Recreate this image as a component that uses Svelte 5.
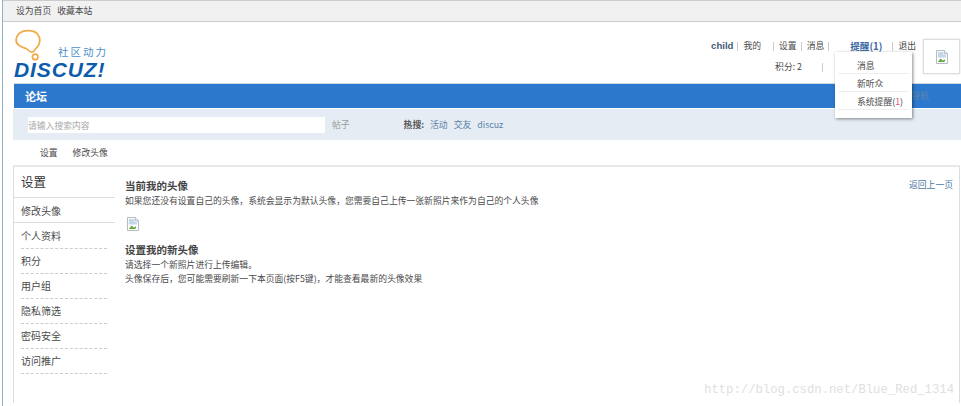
<script>
    const sideLinks = ['个人资料', '积分', '用户组', '隐私筛选', '密码安全', '访问推广'];
    const hotWords = ['活动', '交友', 'discuz'];
</script>

<div class="page">
    <div class="topbar">
        <span>设为首页</span>
        <span>收藏本站</span>
    </div>

    <header class="header">
        <div class="logo">
            <svg class="cloud" width="31" height="35" viewBox="0 0 28 32">
                <path d="M6 4.500C10 .5 20 .5 23.500 5c3 4 2 9.500-1.500 12.500-1.500 1.300-1.500 3-3.500 3.500-2 .5-3.500-1-5-2.700-1.200-1.300-5-1-7.500-3.500C2.500 12.500 3 7.500 6 4.500z" fill="none" stroke="#f0ab4a" stroke-width="1.600"/>
                <circle cx="21" cy="25.500" r="2.500" fill="none" stroke="#f0ab4a" stroke-width="1.600"/>
            </svg>
            <span class="slogan">社区动力</span>
            <span class="wordmark">DISCUZ!</span>
        </div>

        <div class="user">
            <div class="user-row">
                <b class="name">child</b><i class="sep"></i>
                <span>我的</span><i class="sep after-mine"></i>
                <span>设置</span><i class="sep"></i>
                <span>消息</span><i class="sep before-remind"></i>
                <b class="remind">提醒(1)</b><i class="sep after-remind"></i>
                <span>退出</span>
            </div>
            <div class="user-row second">
                <span>积分: 2</span><i class="sep credit"></i>
            </div>
        </div>

        <div class="avatar-box">
            <svg width="12" height="14" viewBox="0 0 13 15">
                <use href="#broken" />
            </svg>
        </div>

        <div class="menu">
            <div class="menu-item">消息</div>
            <div class="menu-item">新听众</div>
            <div class="menu-item">系统提醒<span class="count">(<em>1</em>)</span></div>
        </div>
    </header>

    <nav class="nav">
        <b>论坛</b>
        <span class="nav-right">导航</span>
    </nav>

    <div class="search">
        <div class="search-input">请输入搜索内容</div>
        <span class="search-type">帖子</span>
        <b class="hot-label">热搜:</b>
        {#each hotWords as word}
            <span class="hot">{word}</span>
        {/each}
    </div>

    <div class="crumbs">
        <span>设置</span>
        <span>修改头像</span>
    </div>

    <div class="panel">
        <aside class="side">
            <h2>设置</h2>
            <div class="side-current">修改头像</div>
            {#each sideLinks as link}
                <div class="side-link">{link}</div>
            {/each}
        </aside>

        <main class="content">
            <a class="back" href="#top">返回上一页</a>
            <h3>当前我的头像</h3>
            <p>如果您还没有设置自己的头像，系统会显示为默认头像，您需要自己上传一张新照片来作为自己的个人头像</p>
            <svg class="broken" width="12" height="14" viewBox="0 0 13 15">
                <defs>
                    <g id="broken">
                        <path d="M.5.500H9L12.500 4v10.500H.5z" fill="#fff" stroke="#a9b4bd"/>
                        <path d="M9 .5V4h3.500" fill="#e8edf0" stroke="#a9b4bd"/>
                        <path d="M2 2h6v3h3v3H2z" fill="#c3d6ea"/>
                        <path d="M2 13l3-4 2.500 2.500L9 10l2 3z" fill="#5fa83e"/>
                        <path d="M8 14l4-5v5z" fill="#fff"/>
                    </g>
                </defs>
                <use href="#broken" />
            </svg>
            <h3 class="new">设置我的新头像</h3>
            <p>请选择一个新照片进行上传编辑。</p>
            <p>头像保存后，您可能需要刷新一下本页面(按F5键)，才能查看最新的头像效果</p>
        </main>
    </div>

    <div class="watermark">http://blog.csdn.net/Blue_Red_1314</div>
</div>

<style>
    :global(body) {
        margin: 0;
        background: #fff;
    }

    .page {
        position: relative;
        width: 958px;
        height: 406px;
        margin-left: 2px;
        border-left: 1px solid #8fb4bf;
        overflow: hidden;
        font-family: "Noto Sans CJK SC", "Liberation Sans", sans-serif;
        font-size: 8.800px;
        line-height: 14px;
        color: #4a4a4a;
    }

    .topbar {
        display: flex;
        gap: 6px;
        height: 20px;
        padding-left: 13px;
        align-items: center;
        background: #f1f1f1;
        border-top: 1px solid #ccc;
        border-bottom: 1px solid #ccc;
    }

    .header {
        position: relative;
        display: flex;
        height: 61px;
        padding-left: 11px;
    }

    .logo {
        position: relative;
        width: 100px;
        height: 55px;
    }

    .cloud {
        position: absolute;
        left: -2px;
        top: 7px;
    }

    .slogan {
        position: absolute;
        left: 44px;
        top: 25px;
        font-size: 10.500px;
        line-height: 10px;
        letter-spacing: 2px;
        color: #4d8fcc;
        white-space: nowrap;
    }

    .wordmark {
        position: absolute;
        left: 0;
        top: 40px;
        font-family: "Liberation Sans", sans-serif;
        font-size: 21px;
        line-height: 15px;
        font-weight: bold;
        font-style: italic;
        letter-spacing: .9px;
        color: #0d5cab;
    }

    .user {
        margin-left: auto;
        margin-top: 17px;
    }

    .user-row {
        display: flex;
        align-items: center;
        height: 14px;
    }

    .user-row.second {
        justify-content: flex-end;
        margin-top: 7px;
        padding-right: 93px;
    }

    .name {
        font-family: "Liberation Sans", sans-serif;
        font-size: 9.600px;
        color: #445a78;
    }

    .remind {
        color: #3d6aa5;
        font-size: 9.600px;
    }

    .sep {
        width: 1px;
        height: 9px;
        margin: 0 5px 0 4px;
        background: #ccc;
    }

    .sep.after-mine {
        margin-left: 12px;
    }

    .sep.after-remind {
        margin-left: 10px;
    }

    .sep.before-remind {
        margin-right: 21px;
    }

    .sep.credit {
        margin: 0 0 0 20px;
    }

    .avatar-box {
        display: flex;
        align-items: center;
        justify-content: center;
        width: 35px;
        height: 33px;
        margin: 17px 1px 0 7px;
        border: 1px solid #ddd;
        box-shadow: 0 0 2px #ddd;
    }

    .menu {
        position: absolute;
        left: 832px;
        top: 30px;
        z-index: 2;
        width: 71px;
        height: 62px;
        padding: 4px 3px 0;
        background: #fff;
        box-shadow: 1px 1px 3px rgba(0, 0, 0, .45);
    }

    .menu-item {
        height: 17px;
        padding-left: 19px;
        line-height: 20px;
        border-bottom: 1px solid #eee;
        white-space: nowrap;
    }

    .count em {
        font-style: normal;
        color: #e0527a;
    }

    .nav {
        display: flex;
        justify-content: space-between;
        align-items: center;
        height: 24px;
        margin-left: 11px;
        padding-left: 11px;
        background: #2b78cc;
        border-top: 1px solid #cfd8e0;
    }

    .nav b {
        font-size: 11px;
        color: #fff;
    }

    .nav-right {
        margin-right: 32px;
        color: #5d86ad;
    }

    .search {
        display: flex;
        align-items: center;
        height: 32px;
        margin-left: 10px;
        padding-left: 15px;
        background: #e6ecf4;
        border-top: 1px solid #fff;
        box-sizing: border-box;
    }

    .search-input {
        width: 297px;
        height: 16px;
        line-height: 17px;
        background: #fff;
        color: #aaa;
    }

    .search-type {
        margin-left: 7px;
        color: #999;
    }

    .hot-label {
        margin: 0 6px 0 54px;
        color: #555;
    }

    .hot {
        margin-right: 6px;
        color: #5a7fa8;
    }

    .crumbs {
        display: flex;
        gap: 15px;
        height: 25px;
        padding-left: 37px;
        align-items: center;
    }

    .panel {
        display: flex;
        width: 947px;
        height: 238px;
        margin-left: 10px;
        box-sizing: border-box;
        border: 1px solid #ddd;
        border-top: 2px solid #e8e8e8;
        border-bottom: 0;
    }

    .side {
        width: 101px;
        flex: none;
    }

    .side h2 {
        height: 30px;
        margin: 0;
        padding-left: 7px;
        font-size: 12.500px;
        line-height: 30px;
        font-weight: normal;
        color: #333;
        border-bottom: 1px solid #ddd;
    }

    .side-current {
        height: 24px;
        padding-left: 7px;
        font-size: 10px;
        line-height: 26px;
        border-bottom: 1px solid #ddd;
    }

    .side-link {
        width: 86px;
        height: 24px;
        margin-left: 7px;
        font-size: 10px;
        line-height: 23px;
        border-bottom: 1px dashed #ccc;
    }

    .side-current + .side-link {
        margin-top: 1px;
    }

    .content {
        position: relative;
        flex: 1;
        padding: 11px 0 0 10px;
    }

    .content h3 {
        margin: 0;
        font-size: 10.500px;
        line-height: 16px;
        color: #444;
    }

    .content h3.new {
        margin-top: 11px;
    }

    .content p {
        margin: 0;
        line-height: 14px;
    }

    .broken {
        display: block;
        margin: 9px 0 0 2px;
    }

    .back {
        position: absolute;
        right: 6px;
        top: 11px;
        color: #4a78a8;
        text-decoration: none;
    }

    .watermark {
        position: absolute;
        right: 7px;
        top: 383px;
        font-family: "Liberation Mono", monospace;
        font-size: 12.250px;
        color: #e0e0e0;
    }
</style>
